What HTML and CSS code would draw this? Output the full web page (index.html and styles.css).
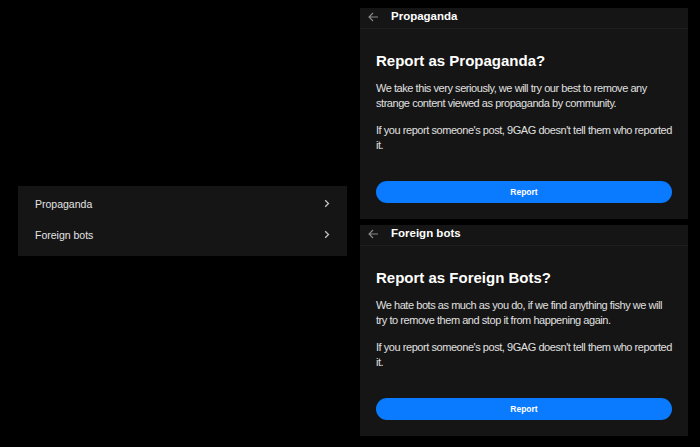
FILE: index.html
```html
<!DOCTYPE html>
<html>
<head>
<meta charset="utf-8">
<link rel="stylesheet" href="styles.css">
</head>
<body>
<div class="page">
  <div class="left">
    <ul class="menu">
      <li class="menu-item"><span>Propaganda</span>
        <svg class="chev" width="6" height="9" viewBox="0 0 6 9"><path d="M1.2 1.2l3.3 3.3L1.2 7.8" fill="none" stroke="#c4c4c4" stroke-width="1.3"/></svg>
      </li>
      <li class="menu-item"><span>Foreign bots</span>
        <svg class="chev" width="6" height="9" viewBox="0 0 6 9"><path d="M1.2 1.2l3.3 3.3L1.2 7.8" fill="none" stroke="#c4c4c4" stroke-width="1.3"/></svg>
      </li>
    </ul>
  </div>
  <div class="right">
    <section class="panel">
      <header class="panel-head">
        <svg class="back" width="11" height="10" viewBox="0 0 11 10"><path d="M10 5H1.5M5 1L1 5l4 4" fill="none" stroke="#8a8a8a" stroke-width="1.1"/></svg>
        <span class="head-title">Propaganda</span>
      </header>
      <div class="panel-body">
        <h2 class="title">Report as Propaganda?</h2>
        <p class="text">We take this very seriously, we will try our best to remove any strange content viewed as propaganda by community.</p>
        <p class="text">If you report someone's post, 9GAG doesn't tell them who reported it.</p>
        <button class="btn">Report</button>
      </div>
    </section>
    <section class="panel">
      <header class="panel-head">
        <svg class="back" width="11" height="10" viewBox="0 0 11 10"><path d="M10 5H1.5M5 1L1 5l4 4" fill="none" stroke="#8a8a8a" stroke-width="1.1"/></svg>
        <span class="head-title">Foreign bots</span>
      </header>
      <div class="panel-body">
        <h2 class="title">Report as Foreign Bots?</h2>
        <p class="text">We hate bots as much as you do, if we find anything fishy we will try to remove them and stop it from happening again.</p>
        <p class="text">If you report someone's post, 9GAG doesn't tell them who reported it.</p>
        <button class="btn">Report</button>
      </div>
    </section>
  </div>
</div>
</body>
</html>
```

FILE: styles.css
```css
html, body {
  margin: 0;
  padding: 0;
  background: #000;
  width: 700px;
  height: 447px;
  overflow: hidden;
  font-family: "Liberation Sans", Arial, sans-serif;
}
.page {
  display: flex;
  align-items: flex-start;
}
.left {
  padding-top: 186px;
  padding-left: 18px;
  width: 329px;
}
.menu {
  list-style: none;
  margin: 0;
  padding: 2px 0 8px;
  background: #151515;
  height: 60px;
}
.menu-item {
  display: flex;
  align-items: center;
  justify-content: space-between;
  height: 31px;
  padding: 0 17px;
  color: #e4e4e4;
  font-size: 10.5px;
}
.chev { margin-right: 0; }
.right {
  margin-left: 13px;
  padding-top: 8px;
  width: 328px;
  display: flex;
  flex-direction: column;
  gap: 6px;
}
.panel {
  background: #151515;
}
.panel-head {
  height: 20px;
  border-bottom: 1px solid #1f1f1f;
  display: flex;
  align-items: center;
  padding-left: 8px;
}
.back { margin-right: 12px; margin-top: -3px; }
.head-title {
  color: #fff;
  font-weight: bold;
  font-size: 11.5px;
  margin-top: -4px;
}
.panel-body {
  padding: 23px 16px 16px;
}
.title {
  margin: 0 0 11px;
  color: #fff;
  font-size: 15px;
  font-weight: bold;
  line-height: 18px;
}
.text {
  margin: 0 0 13px;
  color: #e0e0e0;
  font-size: 11px;
  letter-spacing: -0.45px;
  line-height: 14.5px;
}
.btn {
  display: block;
  width: 100%;
  height: 22px;
  margin-top: 29px;
  border: none;
  border-radius: 11px;
  background: #0a7aff;
  color: #fff;
  font-family: "Liberation Sans", Arial, sans-serif;
  font-weight: bold;
  font-size: 8.5px;
  padding: 0;
}
```
